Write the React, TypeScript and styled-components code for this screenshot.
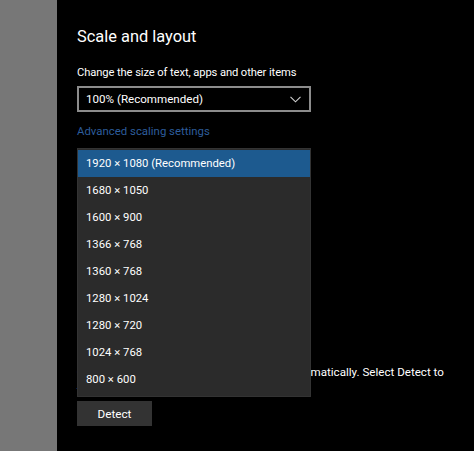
import React from 'react';
import styled, { createGlobalStyle } from 'styled-components';

const GlobalStyle = createGlobalStyle`
  html, body {
    margin: 0;
    padding: 0;
    background: #000;
  }
  body {
    font-family: Roboto, "Open Sans", "Liberation Sans", sans-serif;
    color: #fff;
  }
`;

const Page = styled.div`
  display: flex;
  width: 474px;
  height: 451px;
  overflow: hidden;
`;

const Sidebar = styled.div`
  width: 57px;
  flex: none;
  background: #777777;
`;

const Main = styled.main`
  flex: 1;
  background: #000;
  padding: 25px 0 0 20px;
  box-sizing: border-box;
`;

const Title = styled.h1`
  margin: 0;
  font-size: 16.4px;
  font-weight: 400;
  line-height: 24px;
  color: #fff;
`;

const Label = styled.div`
  margin-top: 16px;
  font-size: 11.2px;
  letter-spacing: -0.1px;
  line-height: 16px;
  color: #fff;
`;

const SelectBox = styled.div`
  margin-top: 5px;
  width: 234px;
  height: 26px;
  box-sizing: border-box;
  border: 2px solid #8c8c8c;
  display: flex;
  align-items: center;
  justify-content: space-between;
  padding: 0 8px 0 7px;
  font-size: 11.6px;
  color: #fff;
`;

const Link = styled.a`
  display: block;
  margin-top: 11px;
  font-size: 11.4px;
  line-height: 16px;
  color: #2d5d9c;
  text-decoration: none;
`;

const ResolutionSection = styled.section`
  position: relative;
  margin-top: 9px;
  height: 215px;
`;

const Popup = styled.ul`
  position: absolute;
  top: 0;
  left: 0;
  width: 234px;
  margin: 0;
  padding: 1px 0 3px;
  box-sizing: border-box;
  list-style: none;
  background: #2b2b2b;
  border: 1px solid #333;
  z-index: 2;
`;

const Item = styled.li<{ $selected?: boolean }>`
  height: 27px;
  display: flex;
  align-items: center;
  padding-left: 8px;
  font-size: 11.3px;
  color: #fff;
  background: ${(p) => (p.$selected ? '#1d5a8f' : 'transparent')};
`;

const Paragraph = styled.p`
  margin: 0;
  width: 372px;
  font-size: 11.6px;
  line-height: 18px;
  color: #fff;
`;

const Button = styled.button`
  display: block;
  margin-top: 2px;
  width: 75px;
  height: 25px;
  border: none;
  background: #333333;
  color: #fff;
  font-family: inherit;
  font-size: 11.7px;
  padding: 0;
`;

const resolutions = [
  '1920 × 1080 (Recommended)',
  '1680 × 1050',
  '1600 × 900',
  '1366 × 768',
  '1360 × 768',
  '1280 × 1024',
  '1280 × 720',
  '1024 × 768',
  '800 × 600',
];

function Chevron() {
  return (
    <svg width="11" height="7" viewBox="0 0 11 7">
      <path d="M0.5 0.8 L5.5 5.8 L10.5 0.8" fill="none" stroke="#cfcfcf" strokeWidth="1.1" />
    </svg>
  );
}

export default function App() {
  return (
    <Page>
      <GlobalStyle />
      <Sidebar />
      <Main>
        <Title>Scale and layout</Title>
        <Label>Change the size of text, apps and other items</Label>
        <SelectBox>
          <span>100% (Recommended)</span>
          <Chevron />
        </SelectBox>
        <Link href="#">Advanced scaling settings</Link>
        <ResolutionSection>
          <Popup>
            {resolutions.map((r, i) => (
              <Item key={r} $selected={i === 0}>
                {r}
              </Item>
            ))}
          </Popup>
        </ResolutionSection>
        <Paragraph>
          Older displays might not always connect automatically. Select Detect to try to connect to them.
        </Paragraph>
        <Button>Detect</Button>
      </Main>
    </Page>
  );
}
